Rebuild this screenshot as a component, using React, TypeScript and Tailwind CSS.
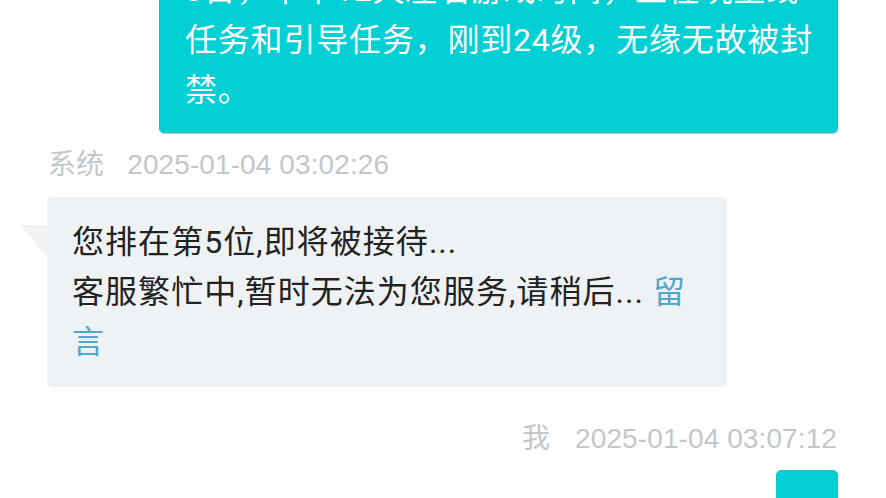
import React from "react";

const font = { fontFamily: 'Roboto, "Noto Sans CJK SC", sans-serif' };
const labelFont = { fontFamily: '"Liberation Sans", "Noto Sans CJK SC", sans-serif' };

export default function App() {
  return (
    <div
      className="w-[886px] h-[498px] overflow-hidden bg-white relative"
      style={font}
    >
      <div className="flex flex-col">
        {/* top user bubble (cut off) */}
        <div className="flex justify-end pr-[48px] mt-[-56px]">
          <div className="w-[679px] bg-[#00cfd3] rounded-[5px] border border-[#16c3c6] shadow-[0_1px_1px_rgba(0,120,130,0.35)] pl-[25px] pr-[22px] pt-[20px] pb-[17px] text-white text-[32px] leading-[50px] tracking-[0.8px]">
            3日，平平12天左右游戏时间，正在玩主线任务和引导任务，刚到24级，无缘无故被封禁。
          </div>
        </div>

        {/* system label */}
        <div
          className="mt-[16px] pl-[48px] flex items-center text-[28px] leading-[32px] text-[#c3c7cb] tracking-[0.1px]"
          style={labelFont}
        >
          <span>系统</span>
          <span className="ml-[23px]">2025-01-04 03:02:26</span>
        </div>

        {/* system bubble */}
        <div className="mt-[16px] pl-[47px] relative">
          <div className="absolute left-[20px] top-[28px] w-0 h-0 border-t-[32px] border-t-[#f2f1f4] border-l-[27px] border-l-transparent" />
          <div className="w-[680px] bg-[#eff2f4] rounded-[5px] pl-[25px] pr-[20px] pt-[20px] pb-[20px] text-[#222222] text-[32px] leading-[50px] tracking-[1.05px]">
            <div>您排在第5位,即将被接待...</div>
            <div>
              客服繁忙中,暂时无法为您服务,请稍后...{" "}
              <span className="text-[#4fa8cc]">留言</span>
            </div>
          </div>
        </div>

        {/* me label */}
        <div
          className="mt-[36px] pr-[49px] flex justify-end items-center text-[28px] leading-[32px] text-[#c3c7cb] tracking-[0.1px]"
          style={labelFont}
        >
          <span>我</span>
          <span className="ml-[25px]">2025-01-04 03:07:12</span>
        </div>

        {/* next user bubble (cut off) */}
        <div className="mt-[15px] pr-[48px] flex justify-end">
          <div className="w-[62px] h-[60px] bg-[#00cfd3] rounded-[5px] border border-[#16c3c6]" />
        </div>
      </div>
    </div>
  );
}
